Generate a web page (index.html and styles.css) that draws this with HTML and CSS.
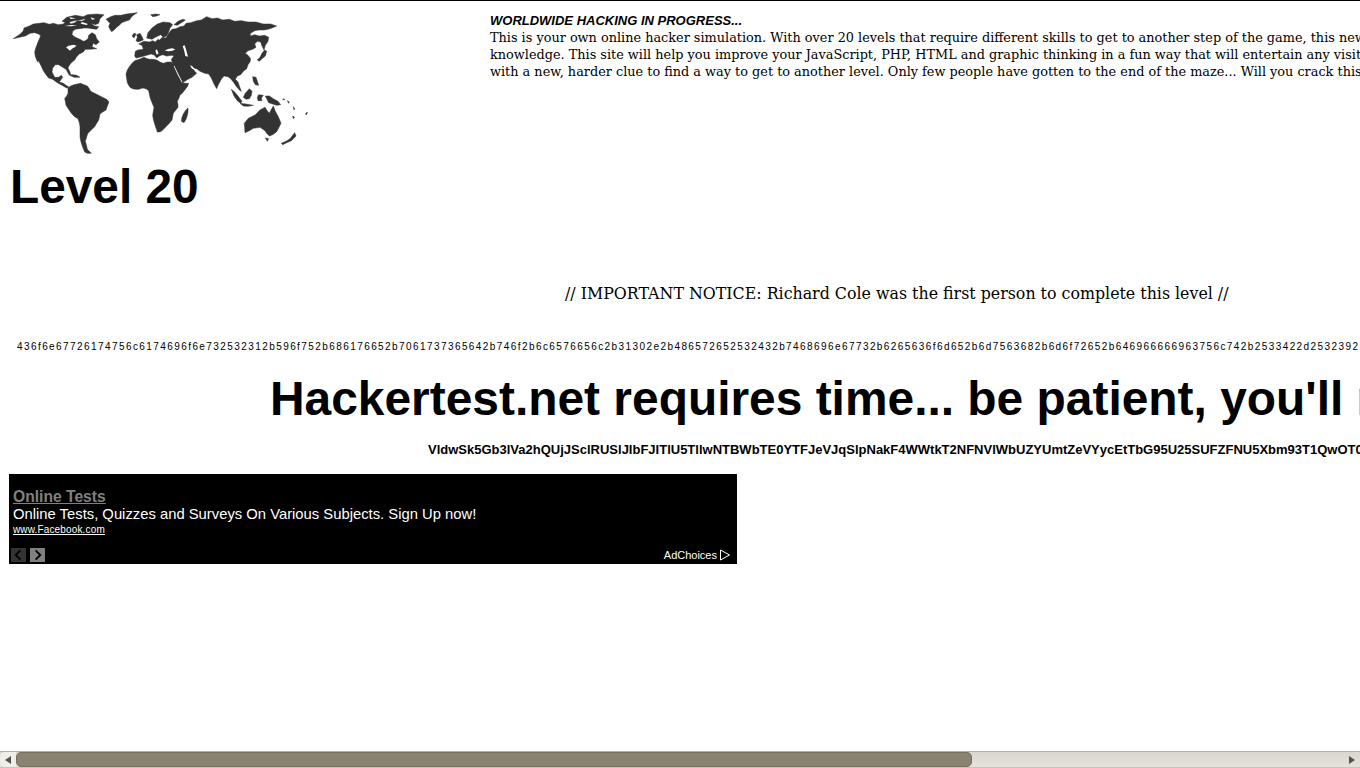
FILE: index.html
```html
<!DOCTYPE html>
<html lang="en">
<head>
<meta charset="utf-8">
<title>Hackertest.net - Level 20</title>
<link rel="stylesheet" href="styles.css">
</head>
<body>
<div class="page">
  <header class="top">
    <div class="brand">
      <svg class="map" viewBox="39 33 888 435" width="296" height="145" aria-label="World map">
        <g class="land">
          <path d="M40 116L52 108 62 101 70 92 72 84 88 78 100 72 118 70 132 68 148 73 160 70 175 74 190 72 196 66 206 64 212 72 224 68 232 62 246 64 256 58 268 60 276 72 284 78 296 80 290 88 276 86 264 84 252 84 238 86 226 88 218 94 216 104 226 112 240 118 250 124 256 122 264 116 266 106 276 98 286 104 290 116 298 126 288 134 280 130 276 140 290 146 270 148 256 148 250 156 238 162 230 170 224 180 214 188 208 196 204 204 210 216 212 224 206 222 198 208 188 202 176 194 166 194 158 204 156 216 164 232 176 232 184 226 188 232 182 240 178 246 190 250 198 256 208 262 200 264 186 256 172 248 158 238 146 234 138 224 130 212 122 196 112 184 106 170 104 156 108 142 114 126 122 108 116 102 104 98 90 100 76 108 58 112Z"/>
          <path d="M186 64L200 52 226 46 250 50 262 44 290 42 312 44 300 56 296 70 286 74 270 68 254 56 240 60 222 62 200 68Z"/>
          <path d="M318 58L332 50 345 46 362 46 380 42 398 40 412 38 402 44 395 50 388 60 376 64 365 68 358 76 350 82 342 90 335 95 330 88 326 80 330 70Z"/>
          <path d="M204 264L212 258 222 254 232 252 242 250 252 254 262 258 268 266 272 274 284 280 296 286 304 290 312 294 320 298 327 306 322 318 318 330 308 336 300 342 298 352 296 360 290 370 284 380 276 388 270 394 264 400 262 404 256 424 260 438 262 448 274 460 262 460 254 456 250 446 246 436 242 422 240 410 240 396 240 380 238 368 234 356 224 350 214 340 206 328 198 316 196 304 194 296 200 288 204 280Z"/>
          <path d="M378 222L382 210 388 200 396 190 404 182 418 178 432 172 442 176 450 178 460 178 470 180 480 186 490 190 502 186 514 186 522 198 528 212 534 226 540 238 546 248 556 250 566 250 562 260 556 268 548 278 540 286 536 296 532 304 534 314 534 322 526 332 520 340 518 350 516 360 508 370 500 378 492 386 484 394 478 396 472 396 468 384 464 372 460 358 458 346 460 334 462 322 456 308 450 292 448 282 446 272 438 266 428 264 416 268 406 268 398 266 390 262 386 256 382 248 380 236Z"/>
          <path d="M546 352L550 342 556 332 564 324 564 336 562 346 558 358 552 368 544 364Z"/>
          <path d="M404 168L406 154 414 150 430 148 426 136 416 132 432 124 448 126 458 122 466 126 474 118 486 112 498 114 506 100 516 88 528 86 540 80 552 78 558 70 572 68 590 62 604 60 620 50 636 56 652 54 668 60 688 58 704 64 724 62 744 66 768 66 790 72 812 72 830 78 816 84 804 88 792 90 776 90 764 92 752 100 750 108 764 104 778 108 794 106 806 112 804 124 796 136 792 150 786 138 782 126 772 124 764 132 768 142 758 148 744 152 736 160 744 166 752 176 750 186 744 194 740 206 730 214 722 224 712 228 706 238 714 246 718 258 724 274 718 270 708 258 700 246 692 236 684 230 672 228 664 238 656 252 650 266 642 252 634 234 626 222 614 220 600 214 590 206 578 204 584 214 590 220 576 232 564 238 548 248 540 238 532 222 524 206 518 192 514 178 522 168 516 166 500 168 488 164 478 168 470 174 464 166 454 162 446 164 432 168 418 172 408 174Z"/>
          <path d="M440 114L444 98 456 84 472 72 490 66 510 68 518 74 510 84 506 96 500 108 490 112 482 104 474 108 466 112 456 118Z"/>
          <path d="M522 74L534 64 548 58 556 60 544 68 532 76Z"/>
          <path d="M408 122L412 112 410 104 420 100 426 110 430 120 420 124 414 126Z"/>
          <path d="M402 114L396 108 402 100 408 102Z"/>
          <path d="M452 44L468 42 480 44 470 48 458 50Z"/>
          <path d="M772 180L780 172 786 160 794 150 800 154 796 168 786 176 778 184Z"/>
          <path d="M694 268L704 276 714 288 726 304 722 310 712 302 702 288Z"/>
          <path d="M730 292L736 280 748 266 756 274 754 286 748 296 738 298Z"/>
          <path d="M720 310L738 312 760 316 744 319 730 318Z"/>
          <path d="M758 230L768 232 772 244 776 256 766 254 760 244Z"/>
          <path d="M796 288L808 288 820 296 834 304 842 314 830 316 818 312 806 308Z"/>
          <path d="M776 284L790 286 784 294 786 302 774 302 772 292Z"/>
          <path d="M733 370L745 355 765 345 780 330 795 322 800 330 808 340 814 328 820 318 826 334 835 350 843 370 836 384 830 395 818 404 808 408 800 400 795 392 780 382 760 385 748 392 735 398Z"/>
          <path d="M796 414L806 416 802 424Z"/>
          <path d="M844 430L858 424 870 416 878 406 884 398 888 408 874 422 860 428 848 434Z"/>
          <path d="M206 224L218 224 230 226 240 232 222 232Z"/>
          <path d="M848 298L852 296 854 300ZM862 302L868 306 866 310ZM880 320L884 326 882 330ZM878 348L884 352 880 356ZM916 342L922 336 920 344Z"/>
        </g>
        <g class="water">
          <path d="M198 142L206 137 220 134 230 137 224 142 216 146 210 152 204 147Z"/>
          <path d="M494 152L504 147 516 145 526 148 518 152 506 154Z"/>
          <path d="M548 138L554 136 558 148 564 170 556 168 552 150Z"/>
          <path d="M521 198L523 197 535 222 547 245 545 246 533 224Z"/>
          <path d="M570 196L576 198 588 211 576 206Z"/>
          <path d="M114 183L117 186 127 210 125 212 116 196Z"/>
          <path d="M194 78L214 75 232 76 212 79ZM246 66L264 72 260 75 242 71ZM208 52L228 55 212 57ZM272 52L286 57 276 59Z"/>
          <path d="M466 152L470 148 476 160 470 164Z"/>
          <path d="M474 116L482 110 486 112 478 120Z"/>
        </g>
      </svg>
      <h1 class="level">Level 20</h1>
    </div>
    <div class="intro">
      <p class="intro-title">WORLDWIDE HACKING IN PROGRESS...</p>
      <p class="intro-line">This is your own online hacker simulation. With over 20 levels that require different skills to get to another step of the game, this new game will test your</p>
      <p class="intro-line">knowledge. This site will help you improve your JavaScript, PHP, HTML and graphic thinking in a fun way that will entertain any visitor. Every level comes</p>
      <p class="intro-line">with a new, harder clue to find a way to get to another level. Only few people have gotten to the end of the maze... Will you crack this one?</p>
    </div>
  </header>
  <p class="notice">// IMPORTANT NOTICE: Richard Cole was the first person to complete this level //</p>
  <p class="hex">436f6e67726174756c6174696f6e732532312b596f752b686176652b7061737365642b746f2b6c6576656c2b31302e2b486572652532432b7468696e67732b6265636f6d652b6d7563682b6d6f72652b646966666963756c742b2533422d2532392</p>
  <h2 class="patience">Hackertest.net requires time... be patient, you'll make it!</h2>
  <p class="code">VldwSk5Gb3lVa2hQUjJSclRUSlJIbFJITlU5TllwNTBWbTE0YTFJeVJqSlpNakF4WWtkT2NFNVlWbUZYUmtZeVYycEtTbG95U25SUFZFNU5Xbm93T1QwOT09</p>
  <aside class="ad">
    <a class="ad-title" href="#">Online Tests</a>
    <p class="ad-text">Online Tests, Quizzes and Surveys On Various Subjects. Sign Up now!</p>
    <a class="ad-url" href="#">www.Facebook.com</a>
    <div class="ad-foot">
      <div class="ad-nav">
        <span class="ad-btn ad-btn-off"><svg viewBox="0 0 16 14" width="16" height="14"><path d="M10 2L5 7l5 5" /></svg></span>
        <span class="ad-btn"><svg viewBox="0 0 16 14" width="16" height="14"><path d="M6 2l5 5-5 5" /></svg></span>
      </div>
      <span class="ad-choices">AdChoices<svg viewBox="0 0 12 12" width="12" height="12"><path d="M1.500 1v10l9-5z" /></svg></span>
    </div>
  </aside>
</div>
<div class="scrollbar">
  <span class="sb-btn sb-left"><svg viewBox="0 0 8 8" width="8" height="8"><path d="M7 0v8L1 4z"/></svg></span>
  <div class="sb-track"><div class="sb-thumb"></div></div>
  <span class="sb-btn sb-right"><svg viewBox="0 0 8 8" width="8" height="8"><path d="M1 0v8l6-4z"/></svg></span>
</div>
</body>
</html>
```
FILE: styles.css
```css
html, body {
  margin: 0;
  height: 100%;
  overflow: hidden;
  background: #fff;
  color: #000;
}
p, h1, h2 { margin: 0; }
.page {
  width: 1889px;
  height: 751px;
  border-top: 1px solid #000;
  box-sizing: border-box;
  padding: 10px 0 0 9px;
  white-space: nowrap;
}
.top { display: flex; height: 258px; }
.brand { width: 481px; flex: none; }
.map { display: block; margin-left: 4px; }
.land { fill: #333; stroke: #333; stroke-width: 1.5; stroke-linejoin: round; }
.water { fill: #fff; }
.level {
  font: bold 47.8px/55px "Liberation Sans", Arial, sans-serif;
  margin-left: 1px;
  margin-top: 3px;
}
.intro { padding-top: 1px; }
.intro-title { font: italic bold 13px/17px "Liberation Sans", Arial, sans-serif; }
.intro-line { font: 12.85px/17px "DejaVu Serif", serif; }
.notice {
  font: 15.83px/20px "DejaVu Serif", serif;
  margin: 15px 0 0 556px;
}
.hex {
  font: 10px/12px "Liberation Sans", Arial, sans-serif;
  letter-spacing: 1.42px;
  margin: 37px 0 0 8px;
}
.patience {
  font: bold 47.9px/55px "Liberation Sans", Arial, sans-serif;
  margin: 18px 0 0 261px;
}
.code {
  font: bold 13px/16px "Liberation Sans", Arial, sans-serif;
  margin: 16px 0 0 419px;
}
.ad {
  width: 728px;
  height: 90px;
  margin-top: 16px;
  box-sizing: border-box;
  padding: 14px 0 0 4px;
  background: #000;
  color: #fff;
  display: flex;
  flex-direction: column;
  align-items: flex-start;
}
.ad-title { font: bold 15.65px/18px "Liberation Sans", Arial, sans-serif; color: #808080; }
.ad-text { font: 14.8px/16px "Liberation Sans", Arial, sans-serif; }
.ad-url { font: 10px/12px "Liberation Sans", Arial, sans-serif; color: #fff; letter-spacing: .15px; margin-top: 2px; }
.ad-foot {
  align-self: stretch;
  margin: 12px 0 0 -3px;
  padding-right: 6px;
  display: flex;
  justify-content: space-between;
  align-items: flex-end;
}
.ad-nav { display: flex; gap: 4px; margin-left: 1px; }
.ad-btn { display: block; width: 15px; height: 14px; background: #808080; }
.ad-btn-off { background: #333; }
.ad-btn svg { display: block; width: 15px; fill: none; stroke: #000; stroke-width: 2; }
.ad-choices { display: flex; align-items: center; gap: 2px; font: 11px/14px "Liberation Sans", Arial, sans-serif; margin-left: -1px; }
.ad-choices svg { fill: none; stroke: #fff; stroke-width: 1; }
.scrollbar {
  position: fixed;
  left: 0;
  right: 0;
  bottom: 0;
  height: 17px;
  display: flex;
  box-sizing: border-box;
  border-top: 1px solid #b5b0a3;
  border-bottom: 1px solid #c8c4b8;
  background: linear-gradient(#d9d6cf, #e6e3dd);
}
.sb-btn { flex: none; width: 16px; display: flex; align-items: center; justify-content: center; }
.sb-btn svg { fill: #55524a; }
.sb-left { background: #f0eee9; border-radius: 5px 0 0 5px; }
.sb-track { flex: 1; display: flex; }
.sb-thumb {
  width: 956px;
  background: #8a8371;
  border: 1px solid #77705f;
  border-radius: 5px;
  box-sizing: border-box;
}
```
